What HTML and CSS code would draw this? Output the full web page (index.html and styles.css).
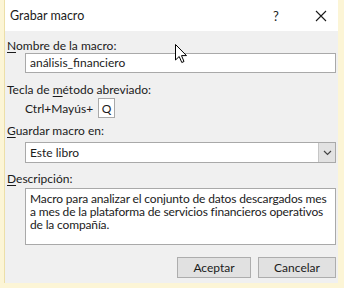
FILE: index.html
```html
<!DOCTYPE html>
<html lang="es">
<head>
<meta charset="utf-8">
<link rel="stylesheet" href="styles.css">
</head>
<body>
<div class="dialog">
  <div class="titlebar">
    <span class="title">Grabar macro</span>
    <span class="help">?</span>
    <span class="close"><svg width="12" height="12" viewBox="0 0 12 12"><path d="M1 1 L11 11 M11 1 L1 11" stroke="#1a1a1a" stroke-width="1.1" fill="none"/></svg></span>
  </div>
  <div class="body">
    <div class="label l1"><u>N</u>ombre de la macro:</div>
    <div class="field input">análisis_financiero</div>
    <div class="label l2">Tecla de <u>m</u>étodo abreviado:</div>
    <div class="shortcut"><span class="keys">Ctrl+Mayús+</span><span class="qbox">Q</span></div>
    <div class="label l3"><u>G</u>uardar macro en:</div>
    <div class="field select"><span class="seltext">Este libro</span><span class="drop"><svg width="9" height="6" viewBox="0 0 9 6"><path d="M1 1 L4.5 4.5 L8 1" stroke="#444" stroke-width="1.2" fill="none"/></svg></span></div>
    <div class="label l4"><u>D</u>escripción:</div>
    <div class="field textarea">Macro para analizar el conjunto de datos descargados mes a mes de la plataforma de servicios financieros operativos de la compañía.</div>
    <div class="buttons">
      <span class="btn">Aceptar</span>
      <span class="btn">Cancelar</span>
    </div>
  </div>
</div>
<svg class="cursor" width="13" height="20" viewBox="0 0 13 20"><path d="M0.5 0.5 L0.5 16 L4.2 12.5 L6.8 18.5 L9 17.5 L6.5 11.6 L11.5 11.6 Z" fill="#fff" stroke="#000" stroke-width="1" stroke-linejoin="round"/></svg>
</body>
</html>
```
FILE: styles.css
```css
html, body {
  margin: 0;
  padding: 0;
}
body {
  width: 344px;
  height: 288px;
  background: #fcf5d6;
  font-family: "Lato", "Noto Sans", sans-serif;
  font-size: 12px;
  color: #1b1b1b;
  position: relative;
  overflow: hidden;
}
.dialog {
  margin-left: 5px;
  width: 333px;
  height: 283px;
  background: #f0f0f0;
  display: flex;
  flex-direction: column;
  box-shadow: -1px 0 0 #ecdfa8;
}
.titlebar {
  height: 31px;
  background: #ffffff;
  display: flex;
  align-items: center;
  padding-left: 5px;
}
.title {
  flex: 1;
  font-size: 12.5px;
}
.help {
  width: 42px;
  font-size: 13px;
  color: #222;
}
.close {
  width: 23px;
  display: flex;
  align-items: center;
}
.body {
  padding: 7px 2px 0 2px;
  display: flex;
  flex-direction: column;
}
.label {
  line-height: 16px;
  height: 16px;
  white-space: nowrap;
}
.label u {
  text-decoration-thickness: 1px;
  text-underline-offset: 2px;
}
.field {
  background: #fff;
  border: 1px solid #a9a9a9;
  box-sizing: border-box;
  margin-left: 18px;
}
.input {
  margin-top: -1px;
  height: 20px;
  line-height: 18px;
  padding-left: 4px;
}
.l2 { margin-top: 9px; }
.shortcut {
  margin-left: 18px;
  height: 20px;
  display: flex;
  align-items: center;
}
.qbox {
  margin-left: 5px;
  width: 17px;
  height: 20px;
  box-sizing: border-box;
  border: 1px solid #a9a9a9;
  background: #fff;
  display: flex;
  align-items: center;
  justify-content: center;
}
.l3 { margin-top: 5px; }
.select {
  margin-top: 3px;
  height: 21px;
  display: flex;
  align-items: stretch;
}
.seltext {
  flex: 1;
  line-height: 19px;
  padding-left: 4px;
}
.drop {
  width: 16px;
  background: #e2e2e2;
  border-left: 1px solid #c6c6c6;
  display: flex;
  align-items: center;
  justify-content: center;
}
.l4 { margin-top: 8px; }
.textarea {
  margin-top: 1px;
  height: 57px;
  padding: 3px 0 0 4px;
  line-height: 13px;
  letter-spacing: -0.15px;
}
.buttons {
  margin-top: 12px;
  display: flex;
  justify-content: flex-end;
  gap: 7px;
}
.btn {
  width: 74px;
  height: 21px;
  box-sizing: border-box;
  border: 1px solid #adadad;
  background: #e1e1e1;
  display: flex;
  align-items: center;
  justify-content: center;
}
.buttons .btn:last-child {
  width: 78px;
}
.cursor {
  position: absolute;
  left: 175px;
  top: 44px;
}
```
